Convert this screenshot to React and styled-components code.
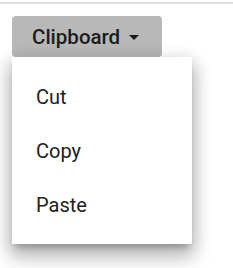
import React, { useState } from 'react';
import styled, { createGlobalStyle } from 'styled-components';

const GlobalStyle = createGlobalStyle`
  html, body {
    margin: 0;
    padding: 0;
    background: #fff;
  }
  body {
    font-family: Roboto, "Liberation Sans", Arial, sans-serif;
    color: #212121;
  }
`;

const Page = styled.div`
  min-height: 268px;
  padding-top: 2px;
  box-sizing: border-box;
`;

const TopRule = styled.div`
  height: 2px;
  background: #e0e0e0;
`;

const Bar = styled.div`
  padding: 12px 12px 0;
`;

const Dropdown = styled.div`
  display: inline-flex;
  flex-direction: column;
  align-items: flex-start;
`;

const MenuButton = styled.button`
  display: flex;
  align-items: center;
  gap: 9px;
  height: 41px;
  padding: 0 23px 0 20px;
  border: none;
  border-radius: 4px;
  background: #b8b8b8;
  color: #1c1c1c;
  font-family: Roboto, "Liberation Sans", Arial, sans-serif;
  font-size: 20.5px;
  font-weight: 500;
  cursor: pointer;
`;

const Caret = styled.span`
  width: 0;
  height: 0;
  margin-top: 2px;
  border-left: 5px solid transparent;
  border-right: 5px solid transparent;
  border-top: 5px solid #1c1c1c;
`;

const Menu = styled.ul`
  width: 180px;
  margin: 0;
  padding: 13px 0 12px;
  list-style: none;
  background: #fff;
  box-shadow: 0 12px 18px 2px rgba(0, 0, 0, 0.22),
    0 4px 16px 2px rgba(0, 0, 0, 0.14), 0 6px 6px -3px rgba(0, 0, 0, 0.2);
`;

const Item = styled.li`
  display: flex;
  align-items: center;
  height: 54px;
  padding: 0 24px;
  font-size: 20px;
  color: #212121;
  cursor: pointer;
`;

export default function App() {
  const [open, setOpen] = useState(true);
  const items = ['Cut', 'Copy', 'Paste'];

  return (
    <Page>
      <GlobalStyle />
      <TopRule />
      <Bar>
        <Dropdown>
          <MenuButton onClick={() => setOpen(!open)}>
            Clipboard
            <Caret />
          </MenuButton>
          {open && (
            <Menu>
              {items.map((label) => (
                <Item key={label}>{label}</Item>
              ))}
            </Menu>
          )}
        </Dropdown>
      </Bar>
    </Page>
  );
}
